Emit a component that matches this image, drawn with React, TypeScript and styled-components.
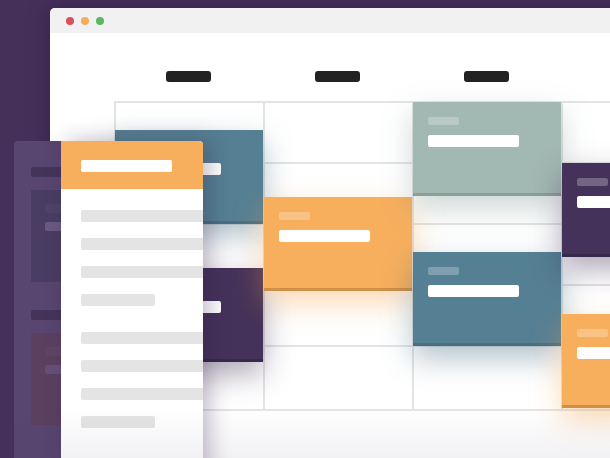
import React from "react";
import styled, { createGlobalStyle } from "styled-components";

const Global = createGlobalStyle`
  body {
    margin: 0;
    background: #45305a;
    font-family: "Liberation Sans", Arial, sans-serif;
    overflow: hidden;
  }
`;

const Stage = styled.div`
  position: relative;
  width: 610px;
  height: 458px;
  overflow: hidden;
  box-sizing: border-box;
  padding: 8px 0 0 50px;
  background: #45305a;
`;

const Window = styled.div`
  width: 640px;
  height: 470px;
  background: #ffffff;
  border-radius: 5px 0 0 0;
  box-shadow: 0 0 22px rgba(20, 8, 35, 0.35);
  overflow: hidden;
`;

const TitleBar = styled.div`
  height: 25px;
  background: #f1f1f1;
  display: flex;
  align-items: center;
  gap: 7px;
  padding-left: 16px;
`;

const Dot = styled.span<{ $c: string }>`
  width: 8px;
  height: 8px;
  border-radius: 50%;
  background: ${(p) => p.$c};
`;

const Body = styled.div`
  padding: 38px 0 0 64px;
`;

const HeaderRow = styled.div`
  display: flex;
  height: 11px;
`;

const HeaderCell = styled.div`
  width: 149px;
  flex-shrink: 0;
  display: flex;
  justify-content: center;
`;

const DayLabel = styled.div`
  width: 45px;
  height: 11px;
  border-radius: 3px;
  background: #222222;
`;

const Grid = styled.div`
  display: flex;
  margin-top: 19px;
`;

const Column = styled.div`
  position: relative;
  width: 149px;
  flex-shrink: 0;
  box-sizing: border-box;
  border-left: 2px solid #e4e4e4;
  border-bottom: 2px solid #e4e4e4;
`;

const Cell = styled.div<{ $h: number }>`
  height: ${(p) => p.$h}px;
  box-sizing: border-box;
  border-top: 2px solid #e4e4e4;
`;

const Card = styled.div<{ $bg: string; $edge: string; $glow: string }>`
  position: absolute;
  left: -1px;
  width: 148px;
  height: 94px;
  box-sizing: border-box;
  padding: 15px 0 0 15px;
  background: ${(p) => p.$bg};
  border-bottom: 3px solid ${(p) => p.$edge};
  box-shadow: 0 12px 28px ${(p) => p.$glow};
  z-index: 1;
`;

const CardLabel = styled.div`
  width: 31px;
  height: 8px;
  border-radius: 2px;
  background: rgba(255, 255, 255, 0.25);
`;

const CardTitle = styled.div`
  width: 91px;
  height: 12px;
  margin-top: 10px;
  border-radius: 2px;
  background: #ffffff;
`;

const BackPanel = styled.div`
  position: absolute;
  left: 14px;
  top: 141px;
  width: 180px;
  height: 340px;
  box-sizing: border-box;
  padding: 26px 0 0 17px;
  background: #584670;
  border-radius: 4px 4px 0 0;
  overflow: hidden;
  z-index: 3;
`;

const DimBar = styled.div`
  width: 150px;
  height: 10px;
  border-radius: 2px;
  background: #44345a;
`;

const DimBlock = styled.div<{ $bg: string; $top: number }>`
  width: 150px;
  height: 92px;
  margin-top: 13px;
  margin-bottom: ${(p) => p.$top}px;
  box-sizing: border-box;
  padding: 14px 0 0 14px;
  background: ${(p) => p.$bg};
`;

const DimLine = styled.div<{ $bg: string }>`
  width: 60px;
  height: 9px;
  margin-bottom: 9px;
  border-radius: 2px;
  background: ${(p) => p.$bg};
`;

const FrontPanel = styled.div`
  position: absolute;
  left: 61px;
  top: 141px;
  width: 142px;
  height: 340px;
  background: #ffffff;
  border-radius: 0 4px 0 0;
  overflow: hidden;
  box-shadow: 6px 0 22px rgba(45, 25, 65, 0.3);
  z-index: 4;
`;

const PanelHeader = styled.div`
  height: 48px;
  box-sizing: border-box;
  padding: 19px 0 0 20px;
  background: #f7af5d;
`;

const PanelTitle = styled.div`
  width: 91px;
  height: 12px;
  border-radius: 2px;
  background: #ffffff;
`;

const PanelList = styled.div`
  display: flex;
  flex-direction: column;
  gap: 16px;
  padding: 21px 0 0 20px;
`;

const ListBar = styled.div<{ $short?: boolean; $gap?: boolean }>`
  width: ${(p) => (p.$short ? "74px" : "140px")};
  height: 12px;
  flex-shrink: 0;
  border-radius: 2px;
  background: #e4e4e4;
  margin-bottom: ${(p) => (p.$gap ? "10px" : "0")};
`;

const BottomFade = styled.div`
  position: absolute;
  left: 0;
  right: 0;
  bottom: 0;
  height: 50px;
  background: linear-gradient(to bottom, rgba(70, 50, 90, 0), rgba(70, 50, 90, 0.07));
  pointer-events: none;
  z-index: 5;
`;

type Ev = { top: number; bg: string; edge: string; glow: string };

const teal = { bg: "#557f93", edge: "#4a6e80", glow: "rgba(60, 100, 125, 0.4)" };
const sage = { bg: "#a2b8b2", edge: "#89a098", glow: "rgba(110, 140, 135, 0.35)" };
const amber = { bg: "#f7af5d", edge: "#cf8f47", glow: "rgba(245, 160, 70, 0.4)" };
const plum = { bg: "#45325a", edge: "#38294a", glow: "rgba(55, 35, 75, 0.4)" };

const rows = [61, 61, 61, 61, 64];

const columns: Ev[][] = [
  [
    { top: 29, ...teal },
    { top: 167, ...plum },
  ],
  [{ top: 96, ...amber }],
  [
    { top: 1, ...sage },
    { top: 151, ...teal },
  ],
  [
    { top: 62, ...plum },
    { top: 213, ...amber },
  ],
];

const list = [
  { short: false },
  { short: false },
  { short: false },
  { short: true, gap: true },
  { short: false },
  { short: false },
  { short: false },
  { short: true },
];

const App = () => {
  return (
    <Stage>
      <Global />
      <Window>
        <TitleBar>
          <Dot $c="#d9505a" />
          <Dot $c="#f5ad5b" />
          <Dot $c="#5cb663" />
        </TitleBar>
        <Body>
          <HeaderRow>
            {columns.map((_, i) => (
              <HeaderCell key={i}>{i < 3 && <DayLabel />}</HeaderCell>
            ))}
          </HeaderRow>
          <Grid>
            {columns.map((events, i) => (
              <Column key={i}>
                {rows.map((h, r) => (
                  <Cell key={r} $h={h} />
                ))}
                {events.map((ev, j) => (
                  <Card key={j} $bg={ev.bg} $edge={ev.edge} $glow={ev.glow} style={{ top: ev.top }}>
                    <CardLabel />
                    <CardTitle />
                  </Card>
                ))}
              </Column>
            ))}
          </Grid>
        </Body>
      </Window>

      <BackPanel>
        <DimBar />
        <DimBlock $bg="#4a3d63" $top={28}>
          <DimLine $bg="#4f4369" />
          <DimLine $bg="#6a5a82" />
        </DimBlock>
        <DimBar />
        <DimBlock $bg="#5b4060" $top={0}>
          <DimLine $bg="#5f4666" />
          <DimLine $bg="#665079" />
        </DimBlock>
      </BackPanel>

      <FrontPanel>
        <PanelHeader>
          <PanelTitle />
        </PanelHeader>
        <PanelList>
          {list.map((b, i) => (
            <ListBar key={i} $short={b.short} $gap={b.gap} />
          ))}
        </PanelList>
      </FrontPanel>

      <BottomFade />
    </Stage>
  );
};

export default App;
